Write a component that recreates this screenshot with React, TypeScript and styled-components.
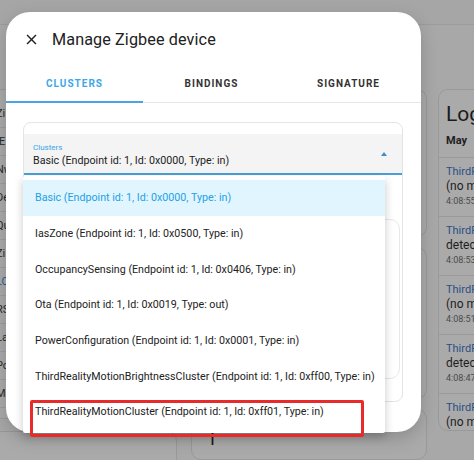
import styled, { createGlobalStyle } from "styled-components";

const GlobalStyle = createGlobalStyle`
  html, body {
    margin: 0;
    padding: 0;
    overflow: hidden;
    font-family: Roboto, "Noto Sans", "Liberation Sans", sans-serif;
  }
`;

const clusters = [
  "Basic (Endpoint id: 1, Id: 0x0000, Type: in)",
  "IasZone (Endpoint id: 1, Id: 0x0500, Type: in)",
  "OccupancySensing (Endpoint id: 1, Id: 0x0406, Type: in)",
  "Ota (Endpoint id: 1, Id: 0x0019, Type: out)",
  "PowerConfiguration (Endpoint id: 1, Id: 0x0001, Type: in)",
  "ThirdRealityMotionBrightnessCluster (Endpoint id: 1, Id: 0xff00, Type: in)",
  "ThirdRealityMotionCluster (Endpoint id: 1, Id: 0xff01, Type: in)",
];

const logEntries = [
  { name: "ThirdReality", text: "(no motion)", time: "4:08:55" },
  { name: "ThirdReality", text: "detected", time: "4:08:53" },
  { name: "ThirdReality", text: "(no motion)", time: "4:08:51" },
  { name: "ThirdReality", text: "detected", time: "4:08:47" },
  { name: "ThirdReality", text: "(no motion)", time: "4:08:45" },
];

const leftRows = ["Zi", "IE", "Nw", "De", "Qu", "Zi", "LQ", "RS", "La", "Po", "Ma"];

export default function App() {
  return (
    <>
      <GlobalStyle />
      <Page>
        <TopBar />
        <Columns>
          <LeftColumn>
            <BgCard>
              {leftRows.map((r, i) => (
                <BgRow key={`${r}-${i}`} $accent={i === 6}>
                  {r}
                </BgRow>
              ))}
            </BgCard>
            <BgCard $grow />
          </LeftColumn>
          <MiddleColumn>
            <BgCard $height={156} />
            <BgCard $height={160} />
            <BgCard $grow>
              <BgHeading>I</BgHeading>
            </BgCard>
          </MiddleColumn>
          <RightColumn>
            <LogCard>
              <LogTitle>Logbook</LogTitle>
              <LogDate>May</LogDate>
              {logEntries.map((e, i) => (
                <LogEntry key={i}>
                  <LogName>{e.name}</LogName>
                  <LogText>{e.text}</LogText>
                  <LogTime>{e.time}</LogTime>
                </LogEntry>
              ))}
            </LogCard>
          </RightColumn>
        </Columns>

        <Dialog>
          <Header>
            <CloseButton>
              <svg width="17" height="17" viewBox="0 0 24 24">
                <path
                  d="M19 6.41 17.59 5 12 10.59 6.41 5 5 6.41 10.59 12 5 17.59 6.41 19 12 13.41 17.59 19 19 17.59 13.41 12z"
                  fill="#212121"
                />
              </svg>
            </CloseButton>
            <Title>Manage Zigbee device</Title>
          </Header>
          <Tabs>
            <Tab $active>Clusters</Tab>
            <Tab>Bindings</Tab>
            <Tab>Signature</Tab>
          </Tabs>
          <Content>
            <Card>
              <SelectField>
                <SelectLabel>Clusters</SelectLabel>
                <SelectValue>{clusters[0]}</SelectValue>
                <Arrow />
              </SelectField>
              <InnerBox />
            </Card>
          </Content>

          <Menu>
            {clusters.map((c, i) => (
              <MenuItem key={c} $selected={i === 0}>
                {c}
              </MenuItem>
            ))}
          </Menu>
          <Highlight />
        </Dialog>
      </Page>
    </>
  );
}

const Page = styled.div`
  position: relative;
  width: 474px;
  height: 460px;
  background: #a8a8a8;
  overflow: hidden;
`;

const TopBar = styled.div`
  height: 24px;
  border-bottom: 1px solid #9c9c9c;
  background: #a6a6a6;
`;

const Columns = styled.div`
  display: flex;
  gap: 11px;
  margin-left: -8px;
  padding-top: 64px;
  height: 371px;
`;

const LeftColumn = styled.div`
  display: flex;
  flex-direction: column;
  gap: 12px;
  width: 185px;
  flex-shrink: 0;
`;

const MiddleColumn = styled.div`
  display: flex;
  flex-direction: column;
  gap: 10px;
  width: 236px;
  margin-left: 3px;
  flex-shrink: 0;
`;

const RightColumn = styled.div`
  display: flex;
  flex-direction: column;
  width: 200px;
  flex-shrink: 0;
`;

const BgCard = styled.div<{ $grow?: boolean; $height?: number }>`
  border: 1px solid #999;
  border-radius: 10px;
  background: #aaaaaa;
  padding: 10px 8px 10px 3px;
  box-sizing: border-box;
  ${({ $height }) => ($height ? `height: ${$height}px;` : "")}
  ${({ $grow }) => ($grow ? "flex: 1 0 auto; min-height: 40px;" : "")}
`;

const BgRow = styled.div<{ $accent?: boolean }>`
  font-size: 11px;
  line-height: 27px;
  color: ${({ $accent }) => ($accent ? "#1f5f9a" : "#2a2a2a")};
  border-bottom: 1px solid #9d9d9d;
`;

const BgHeading = styled.div`
  font-size: 18px;
  color: #1a1a1a;
  padding-left: 15px;
  margin-top: 8px;
`;

const LogCard = styled.div`
  border: 1px solid #999;
  border-radius: 10px;
  background: #aaaaaa;
  height: 340px;
  overflow: hidden;
  white-space: nowrap;
`;

const LogTitle = styled.div`
  font-size: 21px;
  color: #1a1a1a;
  padding: 12px 7px 0;
  height: 24px;
  line-height: 24px;
`;

const LogDate = styled.div`
  font-size: 11px;
  font-weight: 700;
  color: #1e1e1e;
  padding: 0 7px;
  height: 31px;
  line-height: 30px;
  border-bottom: 1px solid #9a9a9a;
`;

const LogEntry = styled.div`
  padding: 6px 7px 0;
  height: 59px;
  box-sizing: border-box;
  border-bottom: 1px solid #9a9a9a;
`;

const LogName = styled.div`
  font-size: 11px;
  line-height: 15px;
  color: #2b4f86;
`;

const LogText = styled.div`
  font-size: 12px;
  line-height: 15px;
  color: #1e1e1e;
`;

const LogTime = styled.div`
  font-size: 9px;
  line-height: 15px;
  color: #4a4a4a;
`;

const Dialog = styled.div`
  position: absolute;
  left: 6px;
  top: 12px;
  width: 415px;
  height: 420px;
  background: #fff;
  border-radius: 24px;
  box-shadow: 0 6px 18px rgba(0, 0, 0, 0.18);
`;

const Header = styled.div`
  display: flex;
  align-items: center;
  height: 54px;
  padding-left: 17px;
`;

const CloseButton = styled.div`
  width: 17px;
  height: 17px;
  display: flex;
  align-items: center;
  justify-content: center;
  margin-right: 12px;
`;

const Title = styled.div`
  font-size: 16.2px;
  color: #212121;
  letter-spacing: 0.1px;
`;

const Tabs = styled.div`
  display: flex;
  height: 36px;
  border-bottom: 1px solid #e6e6e6;
  padding-right: 4px;
`;

const Tab = styled.div<{ $active?: boolean }>`
  flex: 1;
  display: flex;
  align-items: center;
  justify-content: center;
  text-transform: uppercase;
  font-size: 10px;
  font-weight: 700;
  letter-spacing: 1px;
  color: ${({ $active }) => ($active ? "#3ea7e6" : "#333")};
  border-bottom: 2px solid ${({ $active }) => ($active ? "#4aa3e2" : "transparent")};
  margin-bottom: -1px;
`;

const Content = styled.div`
  padding: 19px 18px 0 17px;
`;

const Card = styled.div`
  border: 1px solid #e4e4e4;
  border-radius: 8px;
  padding-top: 11px;
  height: 280px;
  box-sizing: border-box;
`;

const SelectField = styled.div`
  position: relative;
  height: 41px;
  background: #f4f4f4;
  border-bottom: 2px solid #4a9fd8;
  padding: 9px 9px 0;
  box-sizing: border-box;
`;

const SelectLabel = styled.div`
  font-size: 8px;
  line-height: 10px;
  color: #39a6e6;
`;

const SelectValue = styled.div`
  font-size: 10.7px;
  line-height: 16px;
  color: #222;
`;

const Arrow = styled.div`
  position: absolute;
  right: 15px;
  top: 18px;
  width: 0;
  height: 0;
  border-left: 3.5px solid transparent;
  border-right: 3.5px solid transparent;
  border-bottom: 4px solid #3a8fc8;
`;

const InnerBox = styled.div`
  margin: 44px 2px 0 0;
  height: 158px;
  border: 1px solid #e8e8e8;
  border-radius: 10px;
`;

const Menu = styled.div`
  position: absolute;
  left: 17px;
  top: 164px;
  width: 362px;
  padding-top: 4px;
  height: 257px;
  background: #fff;
  box-sizing: border-box;
  border-radius: 2px;
  box-shadow: 0 4px 10px rgba(0, 0, 0, 0.22);
`;

const MenuItem = styled.div<{ $selected?: boolean }>`
  height: 35.7px;
  display: flex;
  align-items: center;
  padding-left: 12px;
  font-size: 10.7px;
  white-space: nowrap;
  color: ${({ $selected }) => ($selected ? "#23a0e6" : "#222")};
  background: ${({ $selected }) => ($selected ? "#e1f5fe" : "transparent")};
`;

const Highlight = styled.div`
  position: absolute;
  left: 24px;
  top: 388px;
  width: 334px;
  height: 37px;
  border: 3px solid #e92a2a;
  border-radius: 2px;
  box-sizing: border-box;
`;
